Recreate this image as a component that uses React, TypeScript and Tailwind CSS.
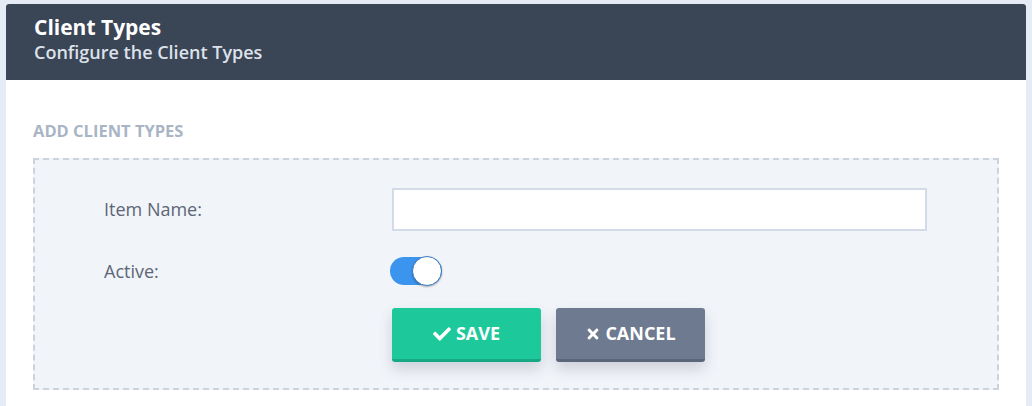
import React from "react"
import { FaCheck, FaTimes } from "react-icons/fa"

export default function App() {
    return (
        <div className="min-h-[406px] bg-[#e6ecf5] pt-[4px] px-[6px] font-['Open_Sans',sans-serif] overflow-hidden">
            <div className="bg-white rounded-t-[3px] min-h-[420px]">
                <div className="bg-[#3a4556] h-[76px] px-[28px] pt-[10px] rounded-t-[3px]">
                    <h1 className="text-white text-[21px] font-bold leading-[26px]">Client Types</h1>
                    <p className="text-[#dde2ea] text-[18px] font-semibold leading-[24px]">Configure the Client Types</p>
                </div>
                <div className="px-[27px] pt-[40px]">
                    <h2 className="text-[#a9b5c4] text-[16.5px] font-bold uppercase leading-[22px]">Add Client Types</h2>
                    <div className="mt-[16px] w-[966px] border-2 border-dashed border-[#cdd3dc] bg-[#f1f4f9] pt-[28px] pb-[26px] pl-[69px]">
                        <div className="flex items-center h-[43px]">
                            <label className="w-[288px] text-[18px] text-[#5c6677]">Item Name:</label>
                            <input type="text" className="w-[535px] h-[43px] bg-white border-2 border-[#d3dbe8] outline-none px-3" />
                        </div>
                        <div className="flex items-center h-[30px] mt-[25px]">
                            <label className="w-[286px] text-[18px] text-[#5c6677]">Active:</label>
                            <div className="relative w-[52px] h-[28px] rounded-full bg-[#3b95ef]">
                                <div className="absolute right-0 top-[-1px] w-[30px] h-[30px] rounded-full bg-white border border-[#3a78c0] shadow-[0_1px_2px_rgba(0,0,0,0.3)]" />
                            </div>
                        </div>
                        <div className="flex gap-[15px] mt-[22px] ml-[288px]">
                            <button className="w-[149px] h-[54px] rounded-[3px] bg-[#1dc89b] border-b-[3px] border-[#17a985] text-white text-[18px] font-bold uppercase flex items-center justify-center gap-[5px] shadow-[0_7px_14px_rgba(60,70,90,0.2)]">
                                <FaCheck className="w-[18px] h-[18px]" />
                                Save
                            </button>
                            <button className="w-[149px] h-[54px] rounded-[3px] bg-[#6d7a8f] border-b-[3px] border-[#5b6679] text-white text-[18px] font-bold uppercase flex items-center justify-center gap-[4px] shadow-[0_7px_14px_rgba(60,70,90,0.2)]">
                                <FaTimes className="w-[16px] h-[16px]" />
                                Cancel
                            </button>
                        </div>
                    </div>
                </div>
            </div>
        </div>
    )
}
